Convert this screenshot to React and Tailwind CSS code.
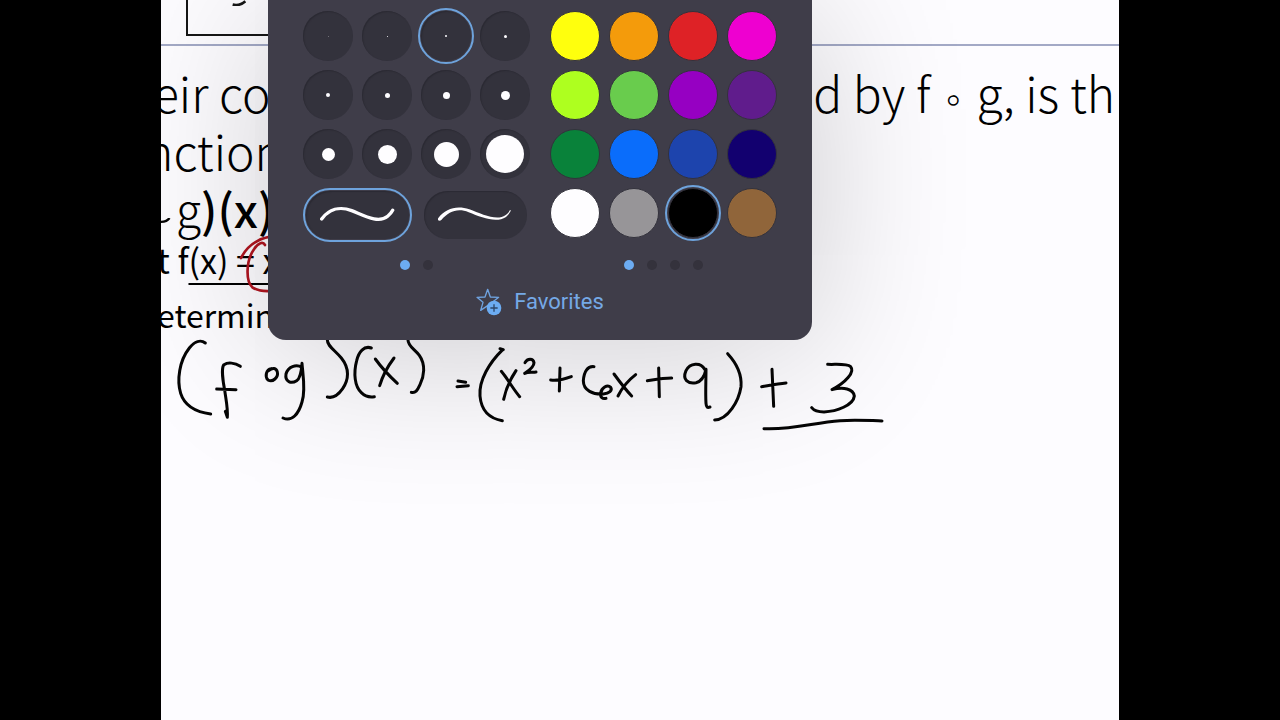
import { useState } from "react";
import clsx from "clsx";

const SIZES = [
  { label: "Hairline", dot: "size-px opacity-40" },
  { label: "Extra fine", dot: "size-px" },
  { label: "Fine", dot: "size-[2px]" },
  { label: "Thin", dot: "size-[3px]" },
  { label: "Light", dot: "size-[4px]" },
  { label: "Regular", dot: "size-[5px]" },
  { label: "Medium", dot: "size-[7px]" },
  { label: "Semi thick", dot: "size-[9px]" },
  { label: "Thick", dot: "size-[13px]" },
  { label: "Heavy", dot: "size-[19px]" },
  { label: "Extra heavy", dot: "size-[25px]" },
  { label: "Marker", dot: "size-[38px]" },
];

const COLORS = [
  { label: "Yellow", bg: "bg-[#ffff0d]" },
  { label: "Orange", bg: "bg-[#f49b0b]" },
  { label: "Red", bg: "bg-[#de2226]" },
  { label: "Magenta", bg: "bg-[#ee00d0]" },
  { label: "Lime", bg: "bg-[#aeff1f]" },
  { label: "Light green", bg: "bg-[#69cc4d]" },
  { label: "Violet", bg: "bg-[#9600c2]" },
  { label: "Purple", bg: "bg-[#601c8c]" },
  { label: "Green", bg: "bg-[#09823a]" },
  { label: "Sky blue", bg: "bg-[#0a6dfb]" },
  { label: "Blue", bg: "bg-[#1d44ad]" },
  { label: "Navy", bg: "bg-[#12006f]" },
  { label: "White", bg: "bg-[#fefdff]" },
  { label: "Gray", bg: "bg-[#979598]" },
  { label: "Black", bg: "bg-black" },
  { label: "Brown", bg: "bg-[#90653a]" },
];

const SELECTED = "outline-2 outline-offset-1 outline-[#6ea3dc]";

const PageDots = ({ count }) => (
  <div className="flex justify-center gap-[13px]">
    {Array.from({ length: count }, (_, i) => (
      <span
        key={i}
        className={clsx(
          "size-[10px] rounded-full",
          i === 0 ? "bg-[#6cacf2]" : "bg-[#34323c]"
        )}
      />
    ))}
  </div>
);

const StrokeButton = ({ label, selected, onClick, children }) => (
  <button
    type="button"
    aria-label={label}
    aria-pressed={selected}
    onClick={onClick}
    className={clsx(
      "flex h-12 flex-1 items-center justify-center rounded-full bg-[#33323c] shadow-[inset_1px_1px_1px_#2b2a33]",
      selected && SELECTED
    )}
  >
    <svg viewBox="0 0 228 54" className="h-[18px] w-[76px]" fill="none">
      {children}
    </svg>
  </button>
);

const PenPanel = () => {
  const [size, setSize] = useState("Fine");
  const [color, setColor] = useState("Black");
  const [stroke, setStroke] = useState("even");

  return (
    <section
      aria-label="Pen settings"
      className="absolute top-0 left-[107px] rounded-b-[18px] bg-[#3f3d49] px-[35px] pt-[11px] pb-[22px] shadow-[0_10px_160px_rgba(0,0,0,0.2)]"
    >
      <div className="flex gap-5">
        <div className="flex flex-col">
          <div className="grid grid-cols-4 gap-[9px]">
            {SIZES.map(({ label, dot }) => (
              <button
                key={label}
                type="button"
                aria-label={label}
                aria-pressed={size === label}
                onClick={() => setSize(label)}
                className={clsx(
                  "flex size-[50px] items-center justify-center rounded-full bg-[#33323c] shadow-[inset_1px_1px_1px_#2b2a33]",
                  size === label && SELECTED
                )}
              >
                <span className={clsx("rounded-full bg-[#fefdff]", dot)} />
              </button>
            ))}
          </div>
          <div className="mt-3 mb-[21px] flex gap-[15px] px-[3px]">
            <StrokeButton
              label="Even stroke"
              selected={stroke === "even"}
              onClick={() => setStroke("even")}
            >
              <path
                d="M5 39C27 10 59 0 95 14C131 28 175 54 203 31C210 25 215 19 218 13"
                stroke="#fefdff"
                strokeWidth="10"
                strokeLinecap="round"
              />
            </StrokeButton>
            <StrokeButton
              label="Tapered stroke"
              selected={stroke === "tapered"}
              onClick={() => setStroke("tapered")}
            >
              <path
                d="M1 36C23 7 57 -3 94 10C130 24 177 46 202 28C210 23 213 18 216 12C218 12 218 14 218 15C214 22 210 28 204 33C175 52 131 35 92 19C59 5 32 17 10 42C4 47 -4 42 1 36Z"
                fill="#fefdff"
              />
            </StrokeButton>
          </div>
          <PageDots count={2} />
        </div>

        <div className="flex flex-col">
          <div className="mb-[22px] grid grid-cols-4 gap-[9px]">
            {COLORS.map(({ label, bg }) => (
              <button
                key={label}
                type="button"
                aria-label={label}
                aria-pressed={color === label}
                onClick={() => setColor(label)}
                className={clsx(
                  "size-[50px] rounded-full border border-[#33323c]",
                  bg,
                  color === label && SELECTED
                )}
              />
            ))}
          </div>
          <PageDots count={4} />
        </div>
      </div>

      <button
        type="button"
        className="mx-auto mt-4 flex items-center gap-3 font-[Roboto,sans-serif] text-[22px] leading-8 text-[#75a9e6]"
      >
        <svg viewBox="0 0 78 84" className="h-7 w-[26px]" fill="none">
          <path
            d="M35 4L43 27L68 28L49 43L55 66L35 53L14 67L21 43L3 28L27 27Z"
            stroke="#6fa3e0"
            strokeWidth="4"
            strokeLinejoin="round"
          />
          <circle cx="54" cy="60" r="22" fill="#6cacf2" />
          <path d="M54 49V71M43 60H65" stroke="#2d4668" strokeWidth="4" />
        </svg>
        Favorites
      </button>
    </section>
  );
};

// Pen strokes drawn on top of the slide
const Ink = () => (
  <svg
    viewBox="0 0 2220 630"
    className="absolute top-[230px] left-0 h-[210px] w-[740px]"
    fill="none"
    stroke="#050505"
    strokeWidth="9"
    strokeLinecap="round"
    strokeLinejoin="round"
    aria-hidden="true"
  >
    <g transform="translate(-18 -180)" stroke="#b01520" strokeWidth="8">
      <path d="M258 264C276 228 304 208 345 200" />
      <path d="M330 225C324 214 310 218 298 236C272 272 272 334 292 352C306 362 324 364 345 363" />
    </g>
    <g transform="translate(-3 300)">
      <path d="M136 39C122 28 104 34 88 54C58 92 50 150 62 190C74 228 108 246 152 252" />
      <path d="M241 109C224 98 204 96 192 104C184 112 188 150 194 180C198 210 204 235 202 262L196 244M170 177L228 179" />
      <path d="M334 116C318 118 314 140 324 150C338 158 356 142 352 126C349 114 338 112 326 122" />
      <path d="M426 112C408 102 384 110 378 132C374 156 394 162 410 152C420 146 424 126 426 100C428 130 438 180 426 216C416 252 396 276 369 264" />
      <path d="M502 30C502 48 524 60 544 84C570 116 566 150 548 176C534 196 520 206 502 201" />
      <path d="M634 54C612 46 596 66 590 92C580 130 584 170 604 188C618 202 632 202 643 200" />
      <path d="M646 87C664 112 688 138 712 160M702 84C684 108 668 136 659 167" />
      <path d="M744 30C744 48 762 56 778 76C798 104 792 140 780 164C772 182 766 190 754 187" />
    </g>
    <g transform="translate(837 330)">
      <path d="M54 123L77 127M51 140L85 137" />
      <path d="M190 29L180 26M186 31C150 66 116 120 120 168C124 214 152 236 187 242" />
      <path d="M184 94C204 118 220 148 239 170M228 92C212 116 198 144 191 178" />
      <path d="M255 68C262 54 280 54 282 68C282 82 266 92 254 100C266 94 276 98 288 96" />
      <path d="M360 84L358 153M332 120C352 122 374 118 394 110" />
      <path d="M462 80C442 78 432 96 430 122C430 152 460 164 490 162C508 160 518 152 512 142C502 132 484 144 482 160C480 172 488 178 498 175" />
      <path d="M522 102C538 124 556 148 575 168M587 104C566 120 546 144 534 168" />
      <path d="M656 84L658 170M622 122C648 118 670 114 695 114" />
    </g>
    <g transform="translate(1497 330)">
      <path d="M134 88C122 66 90 68 78 92C66 120 84 132 108 128C126 124 134 106 138 88C138 120 136 160 138 190C139 202 142 204 150 201" />
      <path d="M203 41C228 68 246 104 243 140C236 184 204 238 164 240" />
      <path d="M336 88L341 199M305 140C330 136 352 132 378 129" />
      <path d="M503 73C530 74 560 70 572 80C586 96 556 128 516 149C550 140 580 146 583 168C580 196 530 214 492 216C474 216 462 212 455 203" />
      <path d="M312 266C400 270 460 248 540 242C590 238 630 242 666 243" />
    </g>
  </svg>
);

export default function App() {
  return (
    <div className="flex min-h-screen bg-black px-[161px]">
      <main className="relative flex-1 overflow-hidden bg-[#fdfcff] font-['Noto_Sans_CJK_SC',sans-serif] text-black">
        <header className="h-[46px] border-b-2 border-[#a3a9c6]">
          <div className="ml-[25px] h-9 w-1/2 border-b-2 border-l-2 border-[#161616] pl-11">
            <svg viewBox="0 0 42 18" className="h-[6px] w-[14px]" fill="none">
              <path d="M2 14C16 17 30 13 40 4" stroke="#161616" strokeWidth="8" />
            </svg>
          </div>
        </header>

        <article className="pt-[17px] whitespace-nowrap">
          <p className="-ml-2 flex justify-between pr-1 text-[48px] leading-[58px] font-light">
            <span>eir co</span>
            <span>
              d by f{" "}
              <span className="font-['DejaVu_Sans',sans-serif] text-[40px] leading-none">
                ∘
              </span>{" "}
              g, is th
            </span>
          </p>
          <p className="-ml-4 text-[48px] leading-[58px] font-light">nction</p>
          <p className="flex items-baseline text-[46px] leading-[58px]">
            <svg viewBox="0 0 18 30" className="h-[10px] w-[15px]" fill="none">
              <path d="M-18 12Q4 12 12 0" stroke="#050505" strokeWidth="7" />
            </svg>
            <span className="font-light">g</span>
            <span className="font-medium">)(x)</span>
          </p>
          <p className="-ml-1 text-[34px] leading-[46px]">
            t f
            <span className="underline decoration-2 underline-offset-[9px] [text-decoration-skip-ink:none]">
              (x) = x
            </span>
          </p>
          <p className="-ml-1 pt-2 text-[32px] leading-[46px]">etermin</p>
        </article>

        <Ink />
        <PenPanel />
      </main>
    </div>
  );
}
